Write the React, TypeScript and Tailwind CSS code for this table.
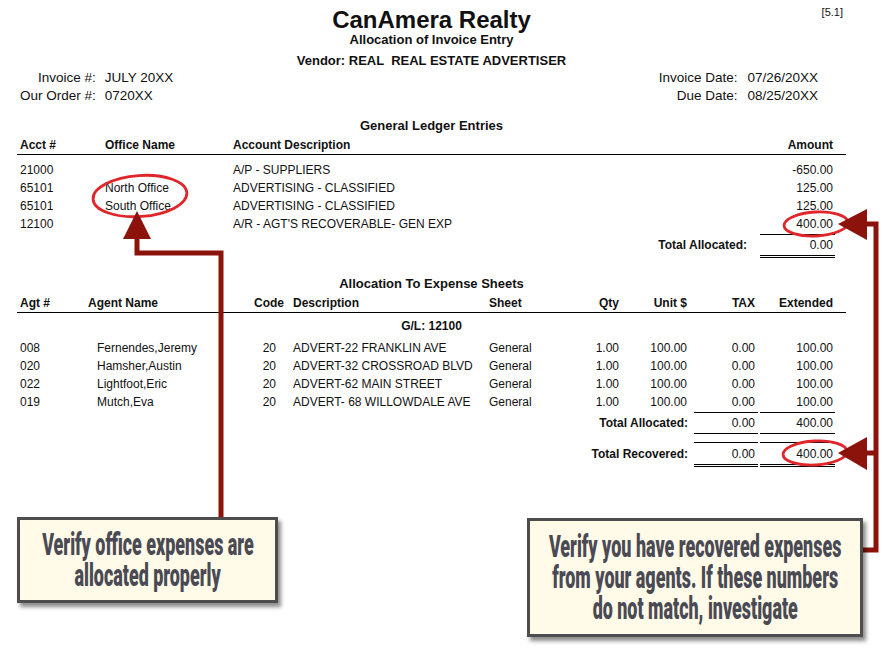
import React from "react"

// Ledger + expense data for the report
const ledgerRows = [
    { acct: "21000", office: "", desc: "A/P - SUPPLIERS", amount: "-650.00" },
    { acct: "65101", office: "North Office", desc: "ADVERTISING - CLASSIFIED", amount: "125.00" },
    { acct: "65101", office: "South Office", desc: "ADVERTISING - CLASSIFIED", amount: "125.00" },
    { acct: "12100", office: "", desc: "A/R - AGT'S RECOVERABLE- GEN EXP", amount: "400.00" },
]

const expenseRows = [
    { agt: "008", name: "Fernendes,Jeremy", desc: "ADVERT-22 FRANKLIN AVE" },
    { agt: "020", name: "Hamsher,Austin", desc: "ADVERT-32 CROSSROAD BLVD" },
    { agt: "022", name: "Lightfoot,Eric", desc: "ADVERT-62 MAIN STREET" },
    { agt: "019", name: "Mutch,Eva", desc: "ADVERT- 68 WILLOWDALE AVE" },
]

function Callout({ lines, className }: { lines: string[]; className: string }) {
    return (
        <div className={`absolute flex flex-col items-center justify-center border-[3px] border-[#4d4d4d] bg-[#fffbe8] shadow-[3px_4px_4px_rgba(0,0,0,0.45)] ${className}`}>
            {lines.map((line) => (
                <div key={line} className="flex w-full justify-center whitespace-nowrap h-[31px] leading-[31px]">
                    <span className="inline-block scale-x-[0.56] font-['Roboto',sans-serif] text-[32px] font-black text-[#4a4a55]">
                        {line}
                    </span>
                </div>
            ))}
        </div>
    )
}

export default function App() {
    return (
        <div className="relative w-[887px] h-[665px] overflow-hidden bg-white text-[#111] font-['Liberation_Sans',Arial,sans-serif]">
            <div className="ml-[17px] w-[829px] pt-[7px]">
                {/* HEADER */}
                <div className="grid grid-cols-[1fr_auto_1fr]">
                    <div />
                    <div className="text-[24px] font-bold h-[25px] leading-[25px]">CanAmera Realty</div>
                    <div className="justify-self-end mr-[3px] text-[11px] leading-[11px]">[5.1]</div>
                </div>
                <div className="text-center text-[13px] font-bold h-[16px] leading-[16px]">Allocation of Invoice Entry</div>
                <div className="mt-[5px] text-center text-[13px] font-bold h-[16px] leading-[16px] whitespace-pre">Vendor: REAL  REAL ESTATE ADVERTISER</div>

                <div className="flex justify-between text-[13.5px]">
                    <div className="grid grid-cols-[auto_auto] gap-x-[9px] pl-[3px]">
                        <div className="text-right h-[18px] leading-[18px]">Invoice #:</div>
                        <div className="h-[18px] leading-[18px]">JULY 20XX</div>
                        <div className="text-right h-[18px] leading-[18px]">Our Order #:</div>
                        <div className="h-[18px] leading-[18px]">0720XX</div>
                    </div>
                    <div className="grid grid-cols-[auto_auto] gap-x-[10px] pr-[28px]">
                        <div className="text-right h-[18px] leading-[18px]">Invoice Date:</div>
                        <div className="h-[18px] leading-[18px]">07/26/20XX</div>
                        <div className="text-right h-[18px] leading-[18px]">Due Date:</div>
                        <div className="h-[18px] leading-[18px]">08/25/20XX</div>
                    </div>
                </div>

                {/* GENERAL LEDGER */}
                <div className="mt-[12px] text-center text-[13px] font-bold h-[18px] leading-[18px]">General Ledger Entries</div>
                <div className="flex pl-[3px] pr-[13px] text-[12px] font-bold h-[20px] leading-[20px] border-b border-black">
                    <div className="w-[85px]">Acct #</div>
                    <div className="w-[128px]">Office Name</div>
                    <div className="flex-1">Account Description</div>
                    <div>Amount</div>
                </div>
                <div className="mt-[6px] text-[12px]">
                    {ledgerRows.map((row, i) => (
                        <div key={i} className="flex pl-[3px] pr-[13px] h-[18px] leading-[18px]">
                            <div className="w-[85px]">{row.acct}</div>
                            <div className="w-[128px]">{row.office}</div>
                            <div className="flex-1">{row.desc}</div>
                            <div>{row.amount}</div>
                        </div>
                    ))}
                </div>
                <div className="mt-[1px] flex justify-end items-start pr-[11px] text-[12px]">
                    <div className="mt-[1px] mr-[13px] font-bold h-[20px] leading-[20px]">Total Allocated:</div>
                    <div className="w-[75px] pr-[2px] text-right border-t border-black border-b-[3px] border-b-black border-double h-[24px] leading-[20px]">0.00</div>
                </div>

                {/* EXPENSE SHEETS */}
                <div className="mt-[17px] text-center text-[13px] font-bold h-[18px] leading-[18px]">Allocation To Expense Sheets</div>
                <div className="flex pl-[3px] text-[12px] font-bold h-[20px] leading-[20px] border-b border-black">
                    <div className="w-[68px]">Agt #</div>
                    <div className="w-[162px]">Agent Name</div>
                    <div className="w-[34px] text-right">Code</div>
                    <div className="w-[9px]" />
                    <div className="w-[196px]">Description</div>
                    <div className="w-[86px]">Sheet</div>
                    <div className="w-[44px] text-right">Qty</div>
                    <div className="w-[68px] text-right">Unit $</div>
                    <div className="w-[68px] text-right">TAX</div>
                    <div className="w-[78px] text-right">Extended</div>
                </div>
                <div className="mt-[4px] text-center text-[12px] font-bold h-[18px] leading-[18px]">G/L: 12100</div>
                <div className="mt-[4px] text-[12px]">
                    {expenseRows.map((row) => (
                        <div key={row.agt} className="flex pl-[3px] h-[18px] leading-[18px]">
                            <div className="w-[68px]">{row.agt}</div>
                            <div className="w-[162px] pl-[9px]">{row.name}</div>
                            <div className="w-[34px] text-right pr-[8px]">20</div>
                            <div className="w-[9px]" />
                            <div className="w-[196px]">{row.desc}</div>
                            <div className="w-[86px]">General</div>
                            <div className="w-[44px] text-right">1.00</div>
                            <div className="w-[68px] text-right">100.00</div>
                            <div className="w-[68px] text-right">0.00</div>
                            <div className="w-[78px] text-right">100.00</div>
                        </div>
                    ))}
                </div>
                <div className="mt-[1px] flex justify-end pr-[11px] text-[12px]">
                    <div className="mr-[6px] pt-[1px] font-bold h-[22px] leading-[20px]">Total Allocated:</div>
                    <div className="w-[64px] pr-[3px] text-right border-y border-black h-[22px] leading-[20px]">0.00</div>
                    <div className="w-[2px]" />
                    <div className="w-[75px] pr-[2px] text-right border-y border-black h-[22px] leading-[20px]">400.00</div>
                </div>
                <div className="mt-[8px] flex justify-end pr-[11px] text-[12px]">
                    <div className="mr-[6px] pt-[2px] font-bold h-[22px] leading-[20px]">Total Recovered:</div>
                    <div className="w-[64px] pr-[3px] pt-[1px] text-right border-t border-black border-b-[3px] border-b-black border-double h-[25px] leading-[20px]">0.00</div>
                    <div className="w-[2px]" />
                    <div className="w-[75px] pr-[2px] pt-[1px] text-right border-t border-black border-b-[3px] border-b-black border-double h-[25px] leading-[20px]">400.00</div>
                </div>
            </div>

            {/* ANNOTATIONS */}
            <svg className="absolute inset-0 pointer-events-none" width="887" height="665" viewBox="0 0 887 665">
                <g fill="none" stroke="#e0262b" strokeWidth="2.8">
                    <ellipse cx="140" cy="196" rx="47" ry="20.5" transform="rotate(-4 140 196)" />
                    <ellipse cx="816" cy="224" rx="32" ry="12" transform="rotate(-3 816 224)" />
                    <ellipse cx="815" cy="453" rx="32" ry="12" transform="rotate(-3 815 453)" />
                </g>
                <g fill="#8b130b">
                    <polygon points="137,211 123,239 151,239" />
                    <polygon points="838,224 867,209 867,240" />
                    <polygon points="838,453 867,437 867,470" />
                </g>
                <g fill="none" stroke="#8b130b" strokeWidth="5" strokeLinejoin="miter">
                    <polyline points="137,238 137,253 221,253 221,518" />
                    <polyline points="865,224 876,224 876,550 862,550" />
                    <line x1="865" y1="453" x2="876" y2="453" />
                </g>
            </svg>

            <Callout className="left-[17px] top-[517px] w-[261px] h-[86px]" lines={["Verify office expenses are", "allocated properly"]} />
            <Callout
                className="left-[527px] top-[518px] w-[336px] h-[119px]"
                lines={["Verify you have recovered expenses", "from your agents. If these numbers", "do not match, investigate"]}
            />
        </div>
    )
}
